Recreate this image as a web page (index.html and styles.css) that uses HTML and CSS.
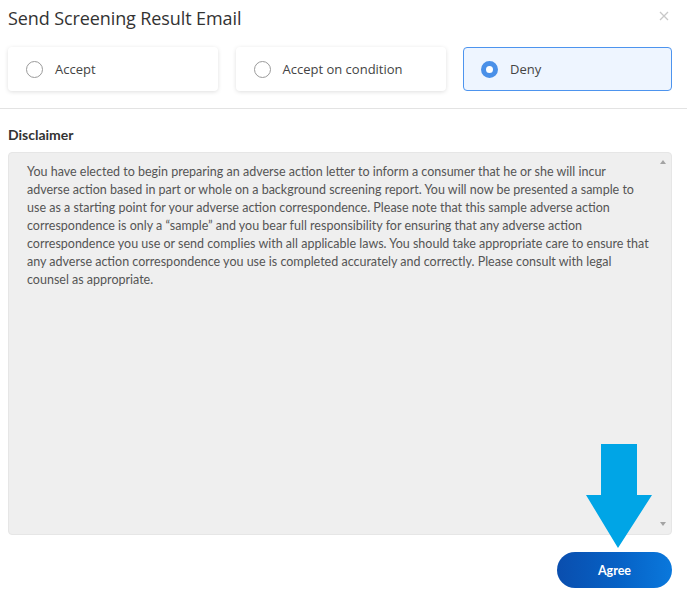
FILE: index.html
```html
<!DOCTYPE html>
<html lang="en">
<head>
<meta charset="utf-8">
<title>Send Screening Result Email</title>
<link rel="stylesheet" href="styles.css">
</head>
<body>
<div class="modal">
  <header class="modal-header">
    <h1 class="modal-title">Send Screening Result Email</h1>
    <button class="close" aria-label="Close">
      <svg width="10" height="10" viewBox="0 0 10 10"><path d="M1 1L9 9M9 1L1 9" stroke="#c8c8c8" stroke-width="1.3" fill="none"/></svg>
    </button>
  </header>
  <div class="options">
    <label class="option"><span class="radio"></span><span class="option-label">Accept</span></label>
    <label class="option"><span class="radio"></span><span class="option-label">Accept on condition</span></label>
    <label class="option selected"><span class="radio"></span><span class="option-label">Deny</span></label>
  </div>
  <div class="divider"></div>
  <section class="disclaimer">
    <h2 class="disclaimer-title">Disclaimer</h2>
    <div class="disclaimer-box">
      <p class="disclaimer-text">You have elected to begin preparing an adverse action letter to inform a consumer that he or she will incur adverse action based in part or whole on a background screening report. You will now be presented a sample to use as a starting point for your adverse action correspondence. Please note that this sample adverse action correspondence is only a “sample” and you bear full responsibility for ensuring that any adverse action correspondence you use or send complies with all applicable laws. You should take appropriate care to ensure that any adverse action correspondence you use is completed accurately and correctly. Please consult with legal counsel as appropriate.</p>
      <div class="scrollbar">
        <span class="arrow-up"></span>
        <span class="arrow-down"></span>
      </div>
    </div>
  </section>
  <footer class="modal-footer">
    <button class="agree">Agree</button>
    <svg class="pointer" width="68" height="106" viewBox="0 0 68 106"><path d="M15 0H51V51H66L32 104L0 51H15Z" fill="#00a5e6"/></svg>
  </footer>
</div>
</body>
</html>
```
FILE: styles.css
```css
* { box-sizing: border-box; }
html, body { margin: 0; padding: 0; background: #fff; }
body { width: 687px; height: 601px; overflow: hidden; font-family: "Open Sans", "Noto Sans", sans-serif; color: #333; }

.modal { position: relative; width: 687px; height: 601px; }

.modal-header { display: flex; justify-content: space-between; align-items: flex-start; padding: 4px 16px 0 8px; height: 47px; }
.modal-title { margin: 0; font-size: 18px; font-weight: 400; color: #333; line-height: 28px; letter-spacing: -0.1px; }
.close { border: 0; background: none; padding: 0; margin-top: 5px; width: 14px; height: 14px; display: flex; align-items: center; justify-content: center; }

.options { display: grid; grid-template-columns: 210px 210px 209px; column-gap: 17.5px; padding: 0 16px 0 8px; }
.option { display: flex; align-items: center; height: 44px; padding-left: 18px; background: #fff; border-radius: 4px; box-shadow: 0 1px 4px rgba(0,0,0,0.13); font-size: 13px; color: #444; }
.radio { width: 17px; height: 17px; border-radius: 50%; border: 1px solid #9a9a9a; background: #fff; margin-right: 12px; flex: none; }
.option.selected { background: #eef5ff; border: 1.5px solid #4d94ee; box-shadow: none; padding-left: 17px; }
.option.selected .radio { border: 5px solid #4a90e8; }

.divider { height: 1px; background: #e3e3e3; margin-top: 17px; }

.disclaimer { padding: 0 15px 0 8px; }
.disclaimer-title { margin: 17px 0 0; font-family: Lato, sans-serif; font-size: 14px; font-weight: 700; color: #333; line-height: 18px; }
.disclaimer-box { position: relative; margin-top: 8px; height: 383px; background: #efefef; border: 1px solid #e6e6e6; border-radius: 4px; padding: 10px 22px 0 18px; }
.disclaimer-text { margin: 0; font-family: Lato, sans-serif; font-size: 12.5px; line-height: 18px; color: #555; }

.scrollbar { position: absolute; top: 0; right: 0; bottom: 0; width: 17px; display: flex; flex-direction: column; justify-content: space-between; align-items: center; padding: 7px 0 8px; }
.arrow-up, .arrow-down { width: 0; height: 0; border-left: 3.5px solid transparent; border-right: 3.5px solid transparent; }
.arrow-up { border-bottom: 4px solid #a3a3a3; }
.arrow-down { border-top: 4px solid #a3a3a3; }

.modal-footer { display: flex; justify-content: flex-end; padding: 17px 15px 0 0; }
.agree { width: 115px; height: 36px; border: 0; border-radius: 18px; background: linear-gradient(90deg, #0a4eae 0%, #0662c6 55%, #0a78dc 100%); color: #fff; font-family: Lato, sans-serif; font-weight: 700; font-size: 12.5px; }
.pointer { position: absolute; left: 586px; top: 444px; }
```
